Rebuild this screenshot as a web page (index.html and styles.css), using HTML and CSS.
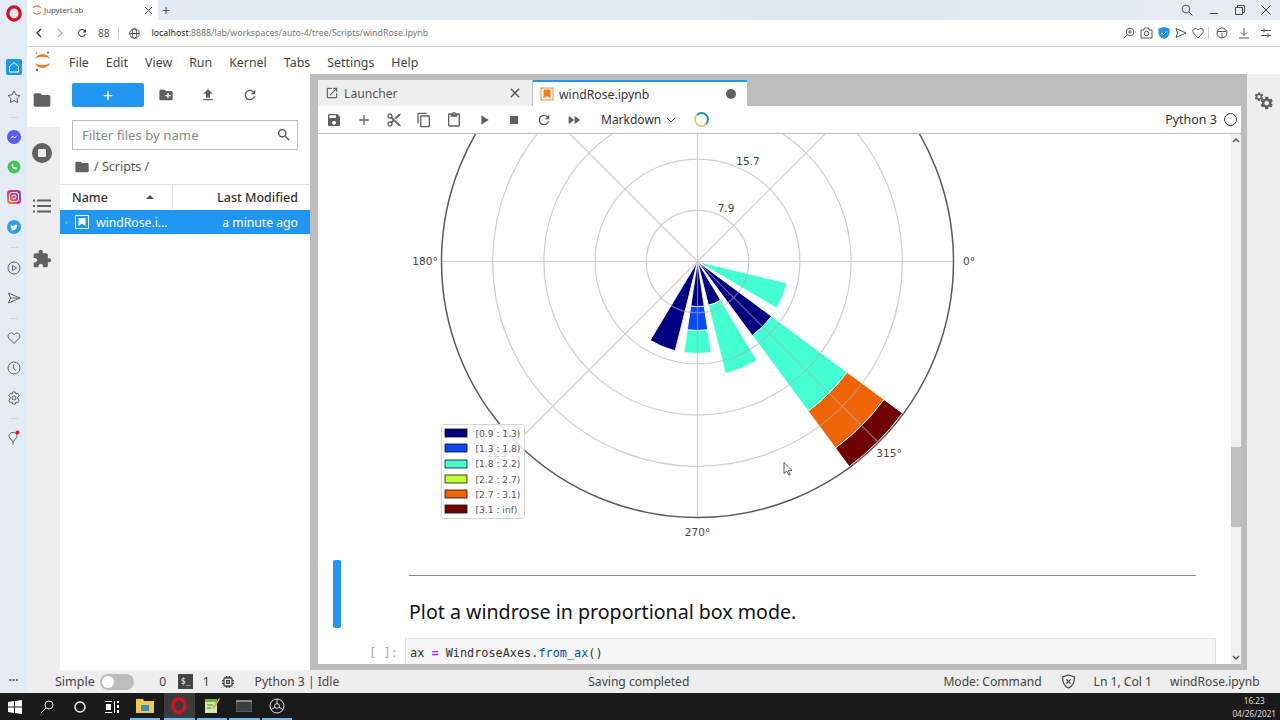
FILE: index.html
```html
<!DOCTYPE html>
<html lang="en">
<head>
  <meta charset="UTF-8">
  <title>JupyterLab</title>
  <link rel="stylesheet" href="styles.css">
</head>
<body>
  <div class="screen">
    <!-- opera side rail -->
    <nav class="rail">
      <div class="rail-logo">
        <svg width="16" height="17" viewBox="0 0 16 17"><ellipse cx="8" cy="8.5" rx="6.2" ry="6.6" fill="none" stroke="#d3121f" stroke-width="3.2"/></svg>
      </div>
      <div class="rail-item"><span class="rail-home"><svg width="12" height="12" viewBox="0 0 12 12"><path d="M1.5 5.5 6 1.5l4.5 4V11h-9z" fill="none" stroke="#fff" stroke-width="1"/></svg></span></div>
      <div class="rail-item"><svg class="rail-line" width="14" height="14" viewBox="0 0 14 14"><path d="M7 1l1.9 3.9 4.1.6-3 2.9.7 4.2L7 10.6l-3.7 2 .7-4.2-3-2.9 4.1-.6z"/></svg></div>
      <div class="rail-sep"></div>
      <div class="rail-item"><svg width="14" height="14" viewBox="0 0 14 14"><circle cx="7" cy="7" r="7" fill="#5a5cf0"/><path d="M2.8 9l3-3.2 1.7 1.4L10.8 5 8 8.4 6.3 7z" fill="#fff"/></svg></div>
      <div class="rail-item"><svg width="14" height="14" viewBox="0 0 14 14"><circle cx="7" cy="7" r="6.5" fill="#43c553"/><path d="M4.5 4.5c0 3 2 5 5 5l.8-1.5-1.8-.9-.8.7c-.8-.4-1.3-1-1.7-1.8l.7-.8L5.8 3.8z" fill="#fff"/></svg></div>
      <div class="rail-item"><svg width="14" height="14" viewBox="0 0 14 14"><defs><linearGradient id="insta" x1="0" y1="1" x2="1" y2="0"><stop offset="0" stop-color="#f9a13a"/><stop offset=".5" stop-color="#d92d77"/><stop offset="1" stop-color="#6a4bd0"/></linearGradient></defs><rect width="14" height="14" rx="3.5" fill="url(#insta)"/><rect x="2.5" y="2.5" width="9" height="9" rx="2.5" fill="none" stroke="#fff"/><circle cx="7" cy="7" r="2" fill="none" stroke="#fff"/></svg></div>
      <div class="rail-item"><svg width="14" height="14" viewBox="0 0 14 14"><circle cx="7" cy="7" r="7" fill="#2a9fe4"/><path d="M3 9.8c3 1.5 7 .2 7.3-4l.8-.9-1 .2c-.7-1-2.8-.8-2.9 1.1C5.8 6.2 4.7 5.5 3.8 4.5c-.4 1 0 1.800.6 2.300l-.7-.1c0 .8.5 1.400 1.300 1.600h-.7c.3.600.8.900 1.400 1-.8.500-1.600.600-2.700.500z" fill="#fff"/></svg></div>
      <div class="rail-sep"></div>
      <div class="rail-item"><svg class="rail-line" width="14" height="14" viewBox="0 0 14 14"><circle cx="7" cy="7" r="6"/><path d="M5.5 4.5 9.5 7l-4 2.5z"/></svg></div>
      <div class="rail-item"><svg class="rail-line" width="14" height="14" viewBox="0 0 14 14"><path d="M1.5 2 13 7 1.5 12 3.5 7zM3.5 7H13"/></svg></div>
      <div class="rail-sep"></div>
      <div class="rail-item"><svg class="rail-line" width="14" height="14" viewBox="0 0 14 14"><path d="M7 12.5 1.8 7.2C.2 5.2 1.5 2 4.2 2 5.5 2 6.4 2.7 7 3.7 7.6 2.7 8.5 2 9.8 2c2.7 0 4 3.2 2.4 5.2z"/></svg></div>
      <div class="rail-item"><svg class="rail-line" width="14" height="14" viewBox="0 0 14 14"><circle cx="7" cy="7" r="6"/><path d="M6.5 3.5V7.5L9 9.5"/></svg></div>
      <div class="rail-item"><svg class="rail-line" width="14" height="14" viewBox="0 0 14 14"><circle cx="7" cy="7" r="2"/><path d="M5.5 1h3l.4 1.900 1.800-.6 1.500 2.500-1.400 1.300v1.800l1.400 1.300-1.500 2.500-1.800-.6-.4 1.900h-3l-.4-1.900-1.800.6-1.500-2.500 1.400-1.300V6.100L1.800 4.800l1.500-2.500 1.800.6z"/></svg></div>
      <div class="rail-sep"></div>
      <div class="rail-item"><svg width="16" height="16" viewBox="0 0 16 16"><path d="M7 14.5V12L3.5 7.5C2 4.5 4.5 2.5 7 2.5s5 2 3.500 5L7 12" fill="none" stroke="#59636b"/><circle cx="11.5" cy="2.5" r="2" fill="#e5172f"/></svg></div>
      <div class="rail-more">···</div>
    </nav>

    <div class="window">
      <!-- browser chrome -->
      <div class="tabstrip">
        <div class="browser-tab">
          <svg width="10" height="12" viewBox="0 0 12 12" preserveAspectRatio="none"><path d="M1.5 4C3 1.2 9 1.2 10.5 4M1.5 8C3 10.8 9 10.8 10.5 8" fill="none" stroke="#e2763a" stroke-width="1.3"/></svg>
          <span class="browser-tab-title">JupyterLab</span>
          <svg class="browser-tab-x" width="9" height="9" viewBox="0 0 9 9"><path d="M1 1l7 7M8 1 1 8" stroke="#444"/></svg>
        </div>
        <span class="tab-plus">+</span>
        <div class="window-btns">
          <svg width="12" height="12" viewBox="0 0 12 12"><circle cx="5" cy="5" r="3.8" fill="none" stroke="#555"/><path d="M8 8l3.5 3.5" stroke="#555"/></svg>
          <svg width="10" height="10" viewBox="0 0 10 10"><path d="M1 8.5h8" stroke="#444"/></svg>
          <svg width="10" height="10" viewBox="0 0 10 10"><path d="M.5 2.5h7v7h-7zM2.5 2.5v-2h7v7h-2" fill="none" stroke="#444"/></svg>
          <svg width="10" height="10" viewBox="0 0 10 10"><path d="M.5.5l9 9M9.5.5l-9 9" stroke="#444"/></svg>
        </div>
      </div>
      <div class="addressbar">
        <svg class="addr-back" width="8" height="10" viewBox="0 0 8 10"><path d="M6 1 2 5l4 4" fill="none" stroke="#333" stroke-width="1.2"/></svg>
        <svg class="addr-fwd" width="8" height="10" viewBox="0 0 8 10"><path d="M2 1l4 4-4 4" fill="none" stroke="#aaa" stroke-width="1.2"/></svg>
        <svg class="addr-reload" width="12" height="12" viewBox="0 0 24 24"><path fill="#444" d="M17.65 6.35C16.2 4.9 14.21 4 12 4c-4.42 0-7.99 3.58-7.99 8s3.57 8 7.99 8c3.73 0 6.84-2.55 7.73-6h-2.08c-.82 2.33-3.04 4-5.65 4-3.31 0-6-2.69-6-6s2.69-6 6-6c1.66 0 3.14.69 4.22 1.78L13 11h7V4l-2.35 2.35z"/></svg>
        <span class="addr-dial">88</span>
        <span class="addr-divider"></span>
        <svg class="addr-globe" width="11" height="11" viewBox="0 0 11 11"><g fill="none" stroke="#444" stroke-width=".9"><circle cx="5.5" cy="5.5" r="4.8"/><ellipse cx="5.5" cy="5.5" rx="2.2" ry="4.8"/><path d="M.7 5.5h9.6"/></g></svg>
        <span class="url"><b>localhost</b>:8888/lab/workspaces/auto-4/tree/Scripts/windRose.ipynb</span>
        <div class="addr-tools">
          <svg width="12" height="12" viewBox="0 0 12 12"><g fill="none" stroke="#555"><circle cx="7" cy="5" r="3.8"/><path d="M4.2 7.8.8 11.2M7 3.2v3.6M5.2 5h3.6"/></g></svg>
          <svg width="13" height="12" viewBox="0 0 13 12"><g fill="none" stroke="#555"><path d="M1 3h2.5l1-2h4l1 2H12v8H1z"/><circle cx="6.5" cy="6.5" r="2.2"/></g></svg>
          <svg width="12" height="12" viewBox="0 0 12 12"><path d="M6 0l5.5 1.5V6c0 3-2.5 5-5.5 6C3 11 .5 9 .5 6V1.5z" fill="#1e96e6"/><path d="M3.5 6 5.3 7.8 8.5 4.5" fill="none" stroke="#fff"/></svg>
          <svg width="12" height="12" viewBox="0 0 12 12"><path d="M1 1.5 11 6 1 10.5 2.5 6z" fill="none" stroke="#555"/></svg>
          <svg width="12" height="12" viewBox="0 0 12 12"><path d="M6 11 1.3 6C0 4.2 1 1.5 3.3 1.5 4.5 1.5 5.4 2.2 6 3.1 6.6 2.2 7.5 1.5 8.7 1.5 11 1.5 12 4.2 10.7 6z" fill="none" stroke="#555"/></svg>
        </div>
        <span class="addr-divider addr-divider-tools"></span>
        <div class="addr-tools-end">
          <svg width="12" height="12" viewBox="0 0 12 12"><g fill="none" stroke="#555"><circle cx="6" cy="6" r="5"/><path d="M1.5 4.5h9M6 6v5"/></g></svg>
          <svg width="12" height="12" viewBox="0 0 12 12"><path d="M6 1v7M3 5.5 6 8.5l3-3M1 11h10" fill="none" stroke="#555"/></svg>
          <svg width="12" height="12" viewBox="0 0 12 12"><path d="M1 3.5h10M1 8.5h10M4 1.5v4M8 6.5v4" fill="none" stroke="#555"/></svg>
        </div>
      </div>

      <!-- jupyterlab menu -->
      <div class="menubar">
        <div class="jp-logo">
          <svg width="17" height="22" viewBox="0 0 17 22"><path d="M1 9C3 2.5 14 2.5 16 9 12.5 6 4.5 6 1 9zM1 13c3.5 3 11.5 3 15 0-2 6.5-13 6.5-15 0z" fill="#f37726"/><circle cx="14" cy="2.5" r="1.1" fill="#767677"/><circle cx="2.5" cy="3" r=".8" fill="#767677"/><circle cx="3" cy="20" r="1.2" fill="#616262"/></svg>
        </div>
        <div class="menu-items">
          <span>File</span><span>Edit</span><span>View</span><span>Run</span><span>Kernel</span><span>Tabs</span><span>Settings</span><span>Help</span>
        </div>
      </div>

      <div class="workspace">
        <!-- left activity strip -->
        <div class="activity">
          <div class="activity-item active">
            <svg width="20" height="20" viewBox="0 0 24 24"><path fill="#616161" d="M10 4H4c-1.1 0-2 .9-2 2v12c0 1.1.9 2 2 2h16c1.1 0 2-.9 2-2V8c0-1.1-.9-2-2-2h-8l-2-2z"/></svg>
          </div>
          <div class="activity-item">
            <svg width="20" height="20" viewBox="0 0 20 20"><circle cx="10" cy="10" r="10" fill="#616161"/><rect x="6" y="6" width="8" height="8" rx="1" fill="#eee"/></svg>
          </div>
          <div class="activity-item">
            <svg width="18" height="14" viewBox="0 0 18 14"><path d="M0 1.5h2M4 1.5h14M0 7h2M4 7h14M0 12.5h2M4 12.5h14" stroke="#616161" stroke-width="1.8"/></svg>
          </div>
          <div class="activity-item">
            <svg width="20" height="20" viewBox="0 0 24 24"><path fill="#616161" d="M20.5 11H19V7c0-1.1-.9-2-2-2h-4V3.5C13 2.12 11.88 1 10.5 1S8 2.12 8 3.5V5H4c-1.1 0-1.99.9-1.99 2v3.8H3.5c1.49 0 2.7 1.21 2.7 2.7s-1.21 2.7-2.7 2.7H2V20c0 1.1.9 2 2 2h3.8v-1.5c0-1.49 1.21-2.7 2.7-2.7 1.49 0 2.7 1.21 2.7 2.7V22H17c1.1 0 2-.9 2-2v-4h1.5c1.38 0 2.5-1.12 2.5-2.5S21.88 11 20.5 11z"/></svg>
          </div>
        </div>

        <!-- file browser -->
        <aside class="filebrowser">
          <div class="fb-toolbar">
            <button class="fb-new">+</button>
            <svg class="fb-tool" width="16" height="16" viewBox="0 0 24 24"><path d="M20 6h-8l-2-2H4c-1.11 0-1.99.89-1.99 2L2 18c0 1.11.89 2 2 2h16c1.11 0 2-.89 2-2V8c0-1.11-.89-2-2-2zm-1 8h-3v3h-2v-3h-3v-2h3V9h2v3h3v2z"/></svg>
            <svg class="fb-tool" width="16" height="16" viewBox="0 0 24 24"><path d="M9 16h6v-6h4l-7-7-7 7h4zm-4 2h14v2H5z"/></svg>
            <svg class="fb-tool" width="16" height="16" viewBox="0 0 24 24"><path d="M17.65 6.35C16.2 4.9 14.21 4 12 4c-4.42 0-7.99 3.58-7.99 8s3.57 8 7.99 8c3.73 0 6.84-2.55 7.73-6h-2.08c-.82 2.33-3.04 4-5.65 4-3.31 0-6-2.69-6-6s2.69-6 6-6c1.66 0 3.14.69 4.22 1.78L13 11h7V4l-2.35 2.35z"/></svg>
          </div>
          <div class="fb-filter">
            <span>Filter files by name</span>
            <svg width="16" height="16" viewBox="0 0 24 24"><path fill="#555" d="M15.5 14h-.79l-.28-.27C15.41 12.59 16 11.11 16 9.5 16 5.91 13.09 3 9.5 3S3 5.91 3 9.5 5.91 16 9.5 16c1.61 0 3.09-.59 4.23-1.57l.27.28v.79l5 4.99L20.49 19l-4.99-5zm-6 0C7.01 14 5 11.99 5 9.5S7.01 5 9.5 5 14 7.01 14 9.5 11.99 14 9.5 14z"/></svg>
          </div>
          <div class="fb-crumbs">
            <svg width="16" height="16" viewBox="0 0 24 24"><path fill="#616161" d="M10 4H4c-1.1 0-2 .9-2 2v12c0 1.1.9 2 2 2h16c1.1 0 2-.9 2-2V8c0-1.1-.9-2-2-2h-8l-2-2z"/></svg>
            <span>/ Scripts /</span>
          </div>
          <div class="fb-head">
            <div class="fb-head-name">Name<i class="sort-arrow"></i></div>
            <div class="fb-head-date">Last Modified</div>
          </div>
          <div class="fb-row">
            <i class="running-dot"></i>
            <svg width="14" height="14" viewBox="0 0 14 14"><path fill="none" stroke="#fff" d="M.5.5h13v13H.5z"/><path fill="#fff" d="M3.5 3h7v8L7 8.5 3.5 11z"/></svg>
            <span class="fb-row-name">windRose.i...</span>
            <span class="fb-row-date">a minute ago</span>
          </div>
        </aside>

        <!-- main dock -->
        <main class="dock">
          <div class="dock-tabs">
            <div class="dock-tab">
              <svg width="14" height="14" viewBox="0 0 24 24"><path fill="#616161" d="M19 19H5V5h7V3H5c-1.11 0-2 .9-2 2v14c0 1.1.89 2 2 2h14c1.1 0 2-.9 2-2v-7h-2v7zM14 3v2h3.59l-9.83 9.83 1.41 1.41L19 6.41V10h2V3h-7z"/></svg>
              <span>Launcher</span>
              <svg class="dock-tab-end" width="16" height="16" viewBox="0 0 24 24"><path fill="#555" d="M19 6.41 17.59 5 12 10.59 6.41 5 5 6.41 10.59 12 5 17.59 6.41 19 12 13.41 17.59 19 19 17.59 13.41 12z"/></svg>
            </div>
            <div class="dock-tab current">
              <svg width="14" height="14" viewBox="0 0 14 14"><rect x="1" y="1" width="12" height="12" fill="none" stroke="#ef8b3a"/><path d="M3.5 2.5h7v9L7 9l-3.5 2.5z" fill="#ef7d1f"/></svg>
              <span>windRose.ipynb</span>
              <i class="dirty-dot"></i>
            </div>
          </div>

          <div class="nb-panel">
            <div class="nb-toolbar">
              <svg class="nb-tool" viewBox="0 0 24 24"><path d="M17 3H5c-1.11 0-2 .9-2 2v14c0 1.1.89 2 2 2h14c1.1 0 2-.9 2-2V7l-4-4zm-5 16c-1.66 0-3-1.34-3-3s1.34-3 3-3 3 1.34 3 3-1.34 3-3 3zm3-10H5V5h10v4z"/></svg>
              <svg class="nb-tool" viewBox="0 0 24 24"><path d="M19 13h-6v6h-2v-6H5v-2h6V5h2v6h6v2z"/></svg>
              <svg class="nb-tool" viewBox="0 0 24 24"><path d="M9.64 7.64c.23-.5.36-1.05.36-1.64 0-2.21-1.79-4-4-4S2 3.79 2 6s1.79 4 4 4c.59 0 1.14-.13 1.64-.36L10 12l-2.36 2.36C7.14 14.13 6.59 14 6 14c-2.21 0-4 1.79-4 4s1.79 4 4 4 4-1.79 4-4c0-.59-.13-1.14-.36-1.64L12 14l7 7h3v-1L9.64 7.64zM6 8c-1.1 0-2-.89-2-2s.9-2 2-2 2 .89 2 2-.9 2-2 2zm0 12c-1.1 0-2-.89-2-2s.9-2 2-2 2 .89 2 2-.9 2-2 2zm6-7.5c-.28 0-.5-.22-.5-.5s.22-.5.5-.5.5.22.5.5-.22.5-.5.5zM19 3l-6 6 2 2 7-7V3h-3z"/></svg>
              <svg class="nb-tool" viewBox="0 0 24 24"><path d="M16 1H4c-1.1 0-2 .9-2 2v14h2V3h12V1zm3 4H8c-1.1 0-2 .9-2 2v14c0 1.1.9 2 2 2h11c1.1 0 2-.9 2-2V7c0-1.1-.9-2-2-2zm0 16H8V7h11v14z"/></svg>
              <svg class="nb-tool" viewBox="0 0 24 24"><path d="M19 2h-4.18C14.4.84 13.3 0 12 0c-1.3 0-2.4.84-2.82 2H5c-1.1 0-2 .9-2 2v16c0 1.1.9 2 2 2h14c1.1 0 2-.9 2-2V4c0-1.1-.9-2-2-2zm-7 0c.55 0 1 .45 1 1s-.45 1-1 1-1-.45-1-1 .45-1 1-1zm7 18H5V4h2v3h10V4h2v16z"/></svg>
              <svg class="nb-tool" viewBox="0 0 24 24"><path d="M8 5v14l11-7z"/></svg>
              <svg class="nb-tool" viewBox="0 0 24 24"><path d="M6 6h12v12H6z"/></svg>
              <svg class="nb-tool" viewBox="0 0 24 24"><path d="M17.65 6.35C16.2 4.9 14.21 4 12 4c-4.42 0-7.99 3.58-7.99 8s3.57 8 7.99 8c3.73 0 6.84-2.55 7.73-6h-2.08c-.82 2.33-3.04 4-5.65 4-3.31 0-6-2.69-6-6s2.69-6 6-6c1.66 0 3.14.69 4.22 1.78L13 11h7V4l-2.35 2.35z"/></svg>
              <svg class="nb-tool" viewBox="0 0 24 24"><path d="M4 18l8.5-6L4 6v12zm9-12v12l8.5-6L13 6z"/></svg>
              <div class="cell-type">
                <span>Markdown</span>
                <svg width="10" height="6" viewBox="0 0 10 6"><path d="M1 1l4 4 4-4" fill="none" stroke="#555"/></svg>
              </div>
              <i class="busy-ring"></i>
              <div class="kernel-name">
                <span>Python 3</span>
                <i class="kernel-dot"></i>
              </div>
            </div>

            <div class="nb-body">
              <div class="cells">
                <!-- viewBox uses page coordinates so the plot numbers read off the screenshot -->
                <svg class="plot" viewBox="318 134 913 416">
                  <g transform="translate(697.5 261.5) rotate(22)" stroke="#fff" stroke-width=".8">
                    <path fill="#44ffd2" d="M0 0 91-13.6A92 92 0 0 1 91 13.6Z"/>
                  </g>
                  <g transform="translate(697.5 261.5) rotate(45)" stroke="#fff" stroke-width=".8">
                    <path fill="#6e0000" d="M229.4-34.3A232 232 0 0 1 229.4 34.3L252.2 37.7A255 255 0 0 0 252.2-37.7Z"/>
                    <path fill="#f06408" d="M184-27.5A186 186 0 0 1 184 27.5L229.4 34.3A232 232 0 0 0 229.4-34.3Z"/>
                    <path fill="#44ffd2" d="M91-13.6A92 92 0 0 1 91 13.6L184 27.5A186 186 0 0 0 184-27.5Z"/>
                    <path fill="#000080" d="M0 0 91-13.6A92 92 0 0 1 91 13.6Z"/>
                  </g>
                  <g transform="translate(697.5 261.5) rotate(67.5)" stroke="#fff" stroke-width=".8">
                    <path fill="#44ffd2" d="M44.5-6.65A45 45 0 0 1 44.5 6.65L114.2 17.07A115.5 115.5 0 0 0 114.2-17.07Z"/>
                    <path fill="#000080" d="M0 0 44.5-6.65A45 45 0 0 1 44.5 6.65Z"/>
                  </g>
                  <g transform="translate(697.5 261.5) rotate(90)" stroke="#fff" stroke-width=".8">
                    <path fill="#44ffd2" d="M68.2-10.2A69 69 0 0 1 68.2 10.2L91 13.6A92 92 0 0 0 91-13.6Z"/>
                    <path fill="#0a48f5" d="M44.5-6.65A45 45 0 0 1 44.5 6.65L68.2 10.2A69 69 0 0 0 68.2-10.2Z"/>
                    <path fill="#000080" d="M0 0 44.5-6.65A45 45 0 0 1 44.5 6.65Z"/>
                  </g>
                  <g transform="translate(697.5 261.5) rotate(112.5)" stroke="#fff" stroke-width=".8">
                    <path fill="#000080" d="M0 0 91-13.6A92 92 0 0 1 91 13.6Z"/>
                  </g>
                  <g class="plot-grid">
                    <circle cx="697.5" cy="261.5" r="51.2"/>
                    <circle cx="697.5" cy="261.5" r="102.4"/>
                    <circle cx="697.5" cy="261.5" r="153.6"/>
                    <circle cx="697.5" cy="261.5" r="204.8"/>
                    <path d="M441.5 261.5H953.5M697.5 5.5V517.5M516.5 80.5 878.5 442.5M878.5 80.5 516.5 442.5"/>
                  </g>
                  <circle class="plot-frame" cx="697.5" cy="261.5" r="256"/>
                  <text class="plot-label" x="425" y="265" text-anchor="middle">180°</text>
                  <text class="plot-label" x="969" y="265" text-anchor="middle">0°</text>
                  <text class="plot-label" x="697.5" y="536" text-anchor="middle">270°</text>
                  <text class="plot-label" x="889" y="457" text-anchor="middle">315°</text>
                  <text class="plot-label" x="500" y="457" text-anchor="middle">225°</text>
                  <text class="plot-label" x="726" y="212" text-anchor="middle">7.9</text>
                  <text class="plot-label" x="748" y="165" text-anchor="middle">15.7</text>
                  <rect class="legend-box" x="441.5" y="424.5" width="83" height="94" rx="2"/>
                  <g class="legend-swatches">
                    <rect x="445" y="429" width="22" height="8" fill="#000080"/>
                    <rect x="445" y="444" width="22" height="8" fill="#0a48f5"/>
                    <rect x="445" y="460" width="22" height="8" fill="#44ffd2"/>
                    <rect x="445" y="475" width="22" height="8" fill="#c6ff30"/>
                    <rect x="445" y="490" width="22" height="8" fill="#f06408"/>
                    <rect x="445" y="505" width="22" height="8" fill="#6e0000"/>
                  </g>
                  <g class="legend-labels">
                    <text x="475.5" y="437">[0.9 : 1.3)</text>
                    <text x="475.5" y="452">[1.3 : 1.8)</text>
                    <text x="475.5" y="467">[1.8 : 2.2)</text>
                    <text x="475.5" y="483">[2.2 : 2.7)</text>
                    <text x="475.5" y="498">[2.7 : 3.1)</text>
                    <text x="475.5" y="513">[3.1 : inf)</text>
                  </g>
                  <path d="M784 462.5v11l2.8-2.5 2 4.2 1.5-.7-2-4.1h3.7z" fill="#fff" stroke="#333" stroke-width=".8"/>
                </svg>

                <div class="md-cell">
                  <i class="cell-bar"></i>
                  <div class="md-content">
                    <hr class="md-rule">
                    <h2>Plot a windrose in proportional box mode.</h2>
                  </div>
                </div>

                <div class="code-cell">
                  <div class="prompt">[ ]:</div>
                  <div class="editor"><span class="c-name">ax</span> <span class="c-op">=</span> <span class="c-name">WindroseAxes</span>.<span class="c-attr">from_ax</span>()</div>
                </div>
              </div>

              <div class="scrollbar">
                <svg width="8" height="6" viewBox="0 0 8 6"><path d="M1 5l3-3 3 3" fill="none" stroke="#555" stroke-width="1.5"/></svg>
                <div class="scroll-gap-top"></div>
                <div class="scroll-thumb"></div>
                <div class="scroll-gap-bottom"></div>
                <svg width="8" height="6" viewBox="0 0 8 6"><path d="M1 1l3 3 3-3" fill="none" stroke="#555" stroke-width="1.5"/></svg>
              </div>
            </div>
          </div>
        </main>

        <div class="right-rail">
          <svg width="24" height="24" viewBox="0 0 24 24" fill="#616161">
            <path transform="translate(6.9 5.2) scale(.65)" d="M19.14 12.94c.04-.3.06-.61.06-.94 0-.32-.02-.64-.07-.94l2.03-1.58c.18-.14.23-.41.12-.61l-1.92-3.32c-.12-.22-.37-.29-.59-.22l-2.39.96c-.5-.38-1.03-.7-1.62-.94l-.36-2.54c-.04-.24-.24-.41-.48-.41h-3.84c-.24 0-.43.17-.47.41l-.36 2.54c-.59.24-1.13.57-1.62.94l-2.39-.96c-.22-.08-.47 0-.59.22L2.74 8.87c-.12.21-.08.47.12.61l2.03 1.58c-.05.3-.09.63-.09.94s.02.64.07.94l-2.03 1.58c-.18.14-.23.41-.12.61l1.92 3.32c.12.22.37.29.59.22l2.39-.96c.5.38 1.03.7 1.62.94l.36 2.54c.05.24.24.41.48.41h3.84c.24 0 .44-.17.47-.41l.36-2.54c.59-.24 1.13-.56 1.62-.94l2.39.96c.22.08.47 0 .59-.22l1.92-3.32c.12-.22.07-.47-.12-.61l-2.01-1.58zM12 15.6c-1.98 0-3.6-1.62-3.6-3.6s1.62-3.6 3.6-3.6 3.6 1.62 3.6 3.6-1.62 3.6-3.6 3.6z"/>
            <path transform="translate(1.6 1.3) scale(.45)" d="M19.14 12.94c.04-.3.06-.61.06-.94 0-.32-.02-.64-.07-.94l2.03-1.58c.18-.14.23-.41.12-.61l-1.92-3.32c-.12-.22-.37-.29-.59-.22l-2.39.96c-.5-.38-1.03-.7-1.62-.94l-.36-2.54c-.04-.24-.24-.41-.48-.41h-3.84c-.24 0-.43.17-.47.41l-.36 2.54c-.59.24-1.13.57-1.62.94l-2.39-.96c-.22-.08-.47 0-.59.22L2.74 8.87c-.12.21-.08.47.12.61l2.03 1.58c-.05.3-.09.63-.09.94s.02.64.07.94l-2.03 1.58c-.18.14-.23.41-.12.61l1.92 3.32c.12.22.37.29.59.22l2.39-.96c.5.38 1.03.7 1.62.94l.36 2.54c.05.24.24.41.48.41h3.84c.24 0 .44-.17.47-.41l.36-2.54c.59-.24 1.13-.56 1.62-.94l2.39.96c.22.08.47 0 .59-.22l1.92-3.32c.12-.22.07-.47-.12-.61l-2.01-1.58zM12 15.6c-1.98 0-3.6-1.62-3.6-3.6s1.62-3.6 3.6-3.6 3.6 1.62 3.6 3.6-1.62 3.6-3.6 3.6z"/>
          </svg>
        </div>
      </div>

      <!-- status bar -->
      <footer class="statusbar">
        <span class="st-simple">Simple</span>
        <span class="toggle"><i></i></span>
        <span class="st-count-a">0</span>
        <span class="st-term">$_</span>
        <span class="st-count-b">1</span>
        <svg class="st-chip" width="16" height="16" viewBox="0 0 24 24"><path fill="#444" d="M15 9H9v6h6V9zm-2 4h-2v-2h2v2zm8-2V9h-2V7c0-1.1-.9-2-2-2h-2V3h-2v2h-2V3H9v2H7c-1.1 0-2 .9-2 2v2H3v2h2v2H3v2h2v2c0 1.1.9 2 2 2h2v2h2v-2h2v2h2v-2h2c1.1 0 2-.9 2-2v-2h2v-2h-2v-2h2zm-4 6H7V7h10v10z"/></svg>
        <span class="st-kernel">Python 3 | Idle</span>
        <span class="st-saving">Saving completed</span>
        <span class="st-mode">Mode: Command</span>
        <svg class="st-shield" width="15" height="15" viewBox="0 0 15 15"><path d="M7.5 1 13.5 3c0 5-1.500 9-6 11-4.500-2-6-6-6-11z" fill="none" stroke="#444" stroke-width="1.2"/><path d="M5.3 5.3l4.4 4.4M9.7 5.3 5.3 9.7" stroke="#444" stroke-width="1.2"/></svg>
        <span class="st-pos">Ln 1, Col 1</span>
        <span class="st-file">windRose.ipynb</span>
      </footer>
    </div>
  </div>

  <!-- windows taskbar -->
  <div class="taskbar">
    <div class="task-icon"><svg width="14" height="14" viewBox="0 0 14 14" fill="#fff"><path d="M0 2l6-.9V6.6H0zM7 1l7-1v6.6H7zM0 7.4h6v5.500l-6-.9zM7 7.4h7V14l-7-1z"/></svg></div>
    <div class="task-icon"><svg width="14" height="14" viewBox="0 0 14 14" fill="none" stroke="#fff"><circle cx="9" cy="5" r="4"/><path d="M6 8l-5 5"/></svg></div>
    <div class="task-icon"><svg width="12" height="12" viewBox="0 0 12 12" fill="none" stroke="#fff" stroke-width="1.5"><circle cx="6" cy="6" r="5"/></svg></div>
    <div class="task-icon"><svg width="14" height="12" viewBox="0 0 14 12" fill="#fff"><path d="M0 0h7v1H0zM0 11h7v1H0zM1 3h5v6H1zM9 0h1v12H9zM12 0h2v2h-2zM12 4h2v3h-2zM12 9h2v3h-2z"/></svg></div>
    <div class="task-icon running"><svg width="18" height="15" viewBox="0 0 18 15"><path d="M0 1h7l1 2h10v12H0z" fill="#f1c84e"/><rect x="5" y="7" width="8" height="6" fill="#3d8fc4"/></svg></div>
    <div class="task-icon running current"><svg width="16" height="17" viewBox="0 0 16 17"><ellipse cx="8" cy="8.5" rx="6" ry="6.8" fill="none" stroke="#d8111f" stroke-width="3.4"/></svg></div>
    <div class="task-icon running"><svg width="16" height="17" viewBox="0 0 16 17"><path d="M1 2h12v14H1z" fill="#cfe8b0"/><path d="M1 2h12v3H1z" fill="#6bb644"/><path d="M8 11l7-10 1 1-6 10z" fill="#e2a92a"/><path d="M3 8h6M3 11h4" stroke="#4a8a2c"/></svg></div>
    <div class="task-icon running"><svg width="16" height="12" viewBox="0 0 16 12"><rect width="16" height="12" fill="#3e3e3e" stroke="#777"/><path d="M0 0h16v2H0z" fill="#888"/></svg></div>
    <div class="task-icon running"><svg width="16" height="16" viewBox="0 0 16 16" fill="none" stroke="#ddd"><circle cx="8" cy="8" r="7"/><circle cx="8" cy="8" r="2.4"/><path d="M8 1v4.6M2 11.5l4-2.3M14 11.5l-4-2.3"/></svg></div>
    <div class="clock"><span>16:23</span><span>04/26/2021</span></div>
  </div>
</body>
</html>
```

FILE: styles.css
```css
* {
  margin: 0;
  padding: 0;
  box-sizing: border-box;
}
html, body {
  height: 100%;
  overflow: hidden;
}
body {
  display: flex;
  flex-direction: column;
  width: 1280px;
  height: 720px;
  background: #fff;
  color: #333;
  font-family: 'Noto Sans', 'Open Sans', Arial, sans-serif;
  font-size: 12.5px;
}
svg {
  display: block;
  flex-shrink: 0;
}
i {
  display: block;
}
.screen {
  display: flex;
  height: 693px;
}

/* opera rail */
.rail {
  width: 27px;
  flex-shrink: 0;
  display: flex;
  flex-direction: column;
  align-items: center;
  background: #e3ecf4;
}
.rail-logo {
  height: 26px;
  margin-bottom: 26px;
  display: flex;
  align-items: center;
  justify-content: center;
}
.rail-item {
  height: 30px;
  display: flex;
  align-items: center;
  justify-content: center;
}
.rail-home {
  width: 16px;
  height: 16px;
  border-radius: 2px;
  background: #1b98e8;
  display: flex;
  align-items: center;
  justify-content: center;
}
.rail-line {
  fill: none;
  stroke: #59636b;
  stroke-width: 1;
}
.rail-sep {
  width: 8px;
  height: 1px;
  margin: 5px 0 4.33px;
  background: #cfd6dc;
  flex-shrink: 0;
}
.rail-more {
  margin-top: auto;
  height: 23px;
  line-height: 20px;
  font-size: 12px;
  font-weight: 700;
  color: #555;
}

/* browser chrome */
.window {
  flex: 1;
  min-width: 0;
  display: flex;
  flex-direction: column;
}
.tabstrip {
  height: 20px;
  display: flex;
  align-items: center;
  background: linear-gradient(90deg, #e3ecf4, #dde8f1 70%, #e6eef5);
}
.browser-tab {
  width: 131px;
  height: 20px;
  background: #fff;
  display: flex;
  align-items: center;
  padding: 0 5px;
  gap: 2px;
}
.browser-tab-title {
  flex: 1;
  font-size: 7.8px;
  color: #555;
}
.tab-plus {
  margin-left: 4px;
  font-size: 14px;
  color: #555;
}
.window-btns {
  margin-left: auto;
  margin-right: 9px;
  display: flex;
  align-items: center;
  gap: 16px;
}
.addressbar {
  height: 27px;
  display: flex;
  align-items: center;
  background: #fff;
  border-bottom: 1px solid #d4d4d4;
  padding-left: 8px;
  font-size: 10px;
}
.addr-fwd {
  margin-left: 13px;
}
.addr-reload {
  margin-left: 12px;
}
.addr-dial {
  margin-left: 10px;
  color: #555;
  font-size: 10px;
}
.addr-divider {
  width: 1px;
  height: 12px;
  background: #ccc;
  display: block;
}
.addressbar > .addr-divider {
  margin-left: 9px;
}
.addr-globe {
  margin-left: 10px;
}
.url {
  margin-left: 11px;
  font-size: 8.8px;
  color: #777;
}
.url b {
  font-weight: 400;
  color: #222;
}
.addr-tools {
  margin-left: auto;
  display: flex;
  align-items: center;
  gap: 5px;
}
.addressbar > .addr-divider-tools {
  margin-left: 4px;
}
.addr-tools-end {
  margin-left: 7px;
  margin-right: 8px;
  display: flex;
  align-items: center;
  gap: 10px;
}

/* jupyter menu */
.menubar {
  height: 27px;
  display: flex;
  align-items: center;
  background: #fff;
}
.jp-logo {
  width: 33px;
  padding-left: 7px;
}
.menu-items {
  margin-left: 9px;
  padding-top: 3px;
  display: flex;
  gap: 17px;
  font-size: 12.4px;
  color: #444;
}
.workspace {
  flex: 1;
  min-height: 0;
  display: flex;
}

/* activity strip */
.activity {
  width: 33px;
  flex-shrink: 0;
  background: #eee;
}
.activity-item {
  height: 53px;
  padding: 0 3px 1px 0;
  display: flex;
  align-items: center;
  justify-content: center;
}
.activity-item.active {
  background: #fff;
}

/* file browser */
.filebrowser {
  width: 250px;
  flex-shrink: 0;
  background: #fff;
  display: flex;
  flex-direction: column;
}
.fb-toolbar {
  height: 46px;
  padding: 9px 12px 0;
  display: flex;
  align-items: flex-start;
}
.fb-new {
  width: 72px;
  height: 24px;
  background: #2196f3;
  color: #fff;
  border: none;
  border-radius: 2px;
  font-size: 18px;
  line-height: 22px;
  font-family: inherit;
}
.fb-tool {
  margin-top: 4px;
  margin-left: 26px;
  fill: #616161;
}
.fb-toolbar .fb-new + .fb-tool {
  margin-left: 14px;
}
.fb-filter {
  margin: 0 12px;
  height: 30px;
  border: 1px solid #bdbdbd;
  display: flex;
  align-items: center;
  justify-content: space-between;
  padding: 0 5px 0 9px;
  font-size: 13.2px;
  color: #8a8a8a;
}
.fb-crumbs {
  height: 34px;
  padding: 0 0 1px 14px;
  display: flex;
  align-items: center;
  gap: 4px;
  color: #555;
}
.fb-head {
  height: 26px;
  padding-bottom: 1px;
  display: flex;
  align-items: center;
  border-top: 1px solid #e0e0e0;
  color: #333;
  font-weight: 500;
}
.fb-head-name {
  width: 113px;
  height: 100%;
  padding-left: 12px;
  display: flex;
  align-items: center;
  border-right: 1px solid #e0e0e0;
}
.sort-arrow {
  margin-left: auto;
  margin-right: 18px;
  border: 4px solid transparent;
  border-top: 0;
  border-bottom: 4px solid #555;
}
.fb-head-date {
  flex: 1;
  text-align: right;
  padding-right: 12px;
}
.fb-row {
  height: 24px;
  background: #2196f3;
  color: #fff;
  display: flex;
  align-items: center;
  padding-left: 5px;
  font-size: 12.2px;
}
.running-dot {
  width: 3px;
  height: 3px;
  border-radius: 50%;
  background: #4ccf60;
  margin-right: 7px;
}
.fb-row-name {
  margin-left: 7px;
}
.fb-row-date {
  margin-left: auto;
  padding-right: 12px;
}

/* main dock */
.dock {
  flex: 1;
  min-width: 0;
  background: #bdbdbd;
  border-left: 1px solid #bdbdbd;
  padding: 6px 6px 6px 7px;
  display: flex;
  flex-direction: column;
}
.dock-tabs {
  height: 26px;
  display: flex;
  gap: 1px;
  flex-shrink: 0;
  font-size: 12.2px;
}
.dock-tab {
  width: 214px;
  background: #eee;
  display: flex;
  align-items: center;
  gap: 5px;
  padding: 0 9px 0 7px;
  color: #555;
}
.dock-tab.current {
  background: #fff;
  border-top: 2px solid #2196f3;
  color: #333;
}
.dock-tab-end {
  margin-left: auto;
}
.dirty-dot {
  margin-left: auto;
  margin-right: 2px;
  width: 10px;
  height: 10px;
  border-radius: 50%;
  background: #616161;
}
.nb-panel {
  flex: 1;
  min-height: 0;
  background: #fff;
  display: flex;
  flex-direction: column;
}
.nb-toolbar {
  height: 28px;
  flex-shrink: 0;
  border-bottom: 1px solid #bdbdbd;
  padding-left: 8px;
  display: flex;
  align-items: center;
  gap: 14px;
}
.nb-tool {
  width: 16px;
  height: 16px;
  fill: #616161;
}
.cell-type {
  margin-left: 5px;
  display: flex;
  align-items: center;
  gap: 5px;
  font-size: 12px;
  color: #333;
}
.busy-ring {
  margin-left: 4px;
  width: 15px;
  height: 15px;
  border-radius: 50%;
  border: 2px solid #2196a0;
  border-bottom-color: #d9d66a;
  border-left-color: #c8d87a;
}
.kernel-name {
  margin-left: auto;
  padding-right: 4px;
  display: flex;
  align-items: center;
  gap: 7px;
  color: #333;
}
.kernel-dot {
  width: 13px;
  height: 13px;
  border: 1px solid #444;
  border-radius: 50%;
}
.nb-body {
  flex: 1;
  min-height: 0;
  display: flex;
}
.cells {
  flex: 1;
  min-width: 0;
  overflow: hidden;
}
.plot {
  width: 913px;
  height: 416px;
}
.plot-grid {
  fill: none;
  stroke: #b0b0b0;
  stroke-width: 1.2;
  opacity: .6;
}
.plot-frame {
  fill: none;
  stroke: #5a5a5a;
  stroke-width: 1.5;
}
.plot-label {
  font-family: 'DejaVu Sans', sans-serif;
  font-size: 10.5px;
  fill: #444;
}
.legend-box {
  fill: #fff;
  fill-opacity: .82;
  stroke: #d6d6d6;
}
.legend-swatches rect {
  stroke: #111;
  stroke-width: .8;
}
.legend-labels text {
  font-family: 'DejaVu Sans', sans-serif;
  font-size: 9.1px;
  fill: #555;
}
.md-cell {
  margin-top: 10px;
  display: flex;
  height: 68px;
  padding-left: 15px;
}
.cell-bar {
  width: 8px;
  height: 68px;
  background: #2196f3;
  border-radius: 2px;
}
.md-content {
  margin-left: 68px;
  margin-right: 35px;
  flex: 1;
  padding-top: 15px;
}
.md-rule {
  border: none;
  border-top: 1px solid #8a8a8a;
}
.md-content h2 {
  margin-top: 22px;
  font-size: 19.6px;
  line-height: 27px;
  font-weight: 400;
  color: #111;
}
.code-cell {
  margin-top: 10px;
  display: flex;
}
.prompt {
  width: 80px;
  text-align: right;
  font-family: 'DejaVu Sans Mono', monospace;
  font-size: 12px;
  color: #aaa;
  line-height: 30px;
}
.editor {
  margin-left: 7px;
  margin-right: 15px;
  flex: 1;
  height: 40px;
  padding: 6px 4px;
  background: #f5f5f5;
  border: 1px solid #e0e0e0;
  font-family: 'DejaVu Sans Mono', monospace;
  font-size: 11.85px;
  line-height: 17px;
  color: #333;
}
.c-op {
  color: #a2f;
  font-weight: 700;
}
.c-attr {
  color: #05a;
}
.scrollbar {
  width: 10px;
  flex-shrink: 0;
  background: #f1f1f1;
  display: flex;
  flex-direction: column;
  align-items: center;
  padding: 3px 0;
}
.scroll-gap-top {
  flex: 0 0 304px;
}
.scroll-thumb {
  width: 100%;
  flex: 0 0 80px;
  background: #c1c1c1;
}
.scroll-gap-bottom {
  flex: 1;
}
.right-rail {
  width: 33px;
  flex-shrink: 0;
  background: #eee;
  padding: 16px 0 0 5px;
}

/* status bar */
.statusbar {
  height: 23px;
  flex-shrink: 0;
  background: #eee;
  display: flex;
  align-items: center;
  color: #444;
  font-size: 12.1px;
  white-space: nowrap;
}
.st-simple {
  margin-left: 28px;
  font-size: 12.5px;
}
.toggle {
  margin-left: 5px;
  width: 34px;
  height: 16px;
  border-radius: 8px;
  background: #bdbdbd;
  padding: 2px;
}
.toggle i {
  width: 12px;
  height: 12px;
  border-radius: 50%;
  background: #fff;
}
.st-count-a {
  margin-left: 25.5px;
}
.st-term {
  margin-left: 12px;
  width: 15px;
  height: 15px;
  background: #444;
  color: #fff;
  font-size: 8px;
  line-height: 15px;
  text-align: center;
  font-family: 'DejaVu Sans Mono', monospace;
}
.st-count-b {
  margin-left: 9.5px;
}
.st-chip {
  margin-left: 10px;
}
.st-kernel {
  margin-left: 19px;
}
.st-saving {
  margin-left: 249px;
}
.st-mode {
  margin-left: 254px;
}
.st-shield {
  margin-left: 19px;
}
.st-pos {
  margin-left: 18px;
}
.st-file {
  margin-left: 18px;
}

/* windows taskbar */
.taskbar {
  height: 27px;
  flex-shrink: 0;
  background: #1a1a1a;
  display: flex;
  align-items: stretch;
}
.task-icon {
  width: 32.5px;
  display: flex;
  align-items: center;
  justify-content: center;
}
.task-icon:first-child {
  margin-left: -1.5px;
}
.task-icon.running {
  border-bottom: 2px solid #76b9ed;
  margin: 0 1px;
  width: 30.5px;
}
.task-icon.current {
  background: #3c3c3c;
  margin-left: 3px;
}
.clock {
  margin-left: auto;
  margin-right: 4px;
  display: flex;
  flex-direction: column;
  align-items: center;
  justify-content: center;
  font-size: 8.2px;
  line-height: 13px;
  color: #ddd;
}
```
